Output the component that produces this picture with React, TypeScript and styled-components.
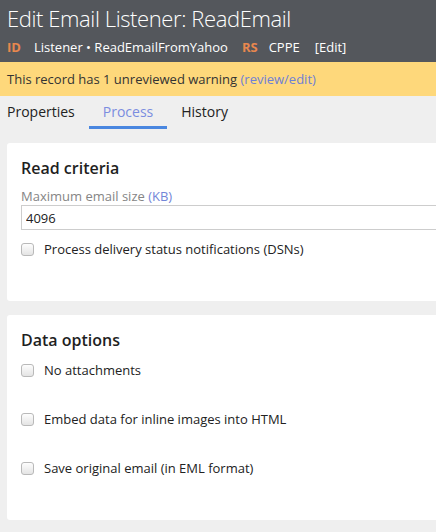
import React from "react";
import styled, { createGlobalStyle } from "styled-components";

const GlobalStyle = createGlobalStyle`
  html, body {
    margin: 0;
    padding: 0;
    background: #efefef;
  }
  body {
    font-family: "Open Sans", "Noto Sans", sans-serif;
    font-size: 13px;
    color: #222;
  }
`;

const Page = styled.div`
  width: 436px;
  height: 532px;
  overflow: hidden;
  background: #efefef;
  display: flex;
  flex-direction: column;
`;

const Header = styled.header`
  background: #54575c;
  color: #fff;
  padding: 3px 7px 6px;
`;

const Title = styled.h1`
  margin: 0;
  font-size: 22px;
  font-weight: 300;
  letter-spacing: -0.4px;
  line-height: 30px;
  white-space: nowrap;
`;

const Meta = styled.div`
  margin-top: 5px;
  display: flex;
  align-items: baseline;
  font-size: 13px;
  line-height: 18px;
  white-space: nowrap;
`;

const MetaKey = styled.span`
  color: #e8874e;
  font-weight: 700;
  margin-right: ${(p: { $gap: number }) => p.$gap}px;
`;

const MetaValue = styled.span<{ $gap?: number }>`
  margin-right: ${(p) => p.$gap ?? 0}px;
`;

const Warning = styled.div`
  background: #fed87b;
  padding: 0 7px;
  line-height: 34px;
  font-size: 13px;
  color: #333;
`;

const Link = styled.a`
  color: #6e80d6;
  text-decoration: none;
`;

const Tabs = styled.nav`
  display: flex;
  padding-top: 6px;
`;

const Tab = styled.div<{ $active?: boolean }>`
  padding: 0 14px 4px;
  font-size: 14px;
  line-height: 20px;
  color: ${(p) => (p.$active ? "#7b8de0" : "#222")};
  border-bottom: 3px solid ${(p) => (p.$active ? "#4a87e0" : "transparent")};

  &:first-child {
    padding-left: 7px;
  }
`;

const Body = styled.main`
  flex: 1;
  display: flex;
  flex-direction: column;
  gap: 14px;
  padding: 14px 0 0 7px;
`;

const Card = styled.section`
  background: #fff;
  border-radius: 3px 0 0 3px;
  padding: 14px 0 43px 14px;
  display: flex;
  flex-direction: column;
`;

const CardTitle = styled.h2`
  margin: 0 0 ${(p: { $gap: number }) => p.$gap}px;
  font-size: 16px;
  font-weight: 600;
  line-height: 22px;
  color: #1f1f1f;
`;

const Label = styled.label`
  color: #858585;
  font-size: 13px;
  line-height: 18px;
`;

const Unit = styled.span`
  color: #7286d8;
`;

const Input = styled.input`
  box-sizing: border-box;
  height: 25px;
  width: 100%;
  margin: 0;
  padding: 0 4px;
  border: 1px solid #cdcdcd;
  border-right: none;
  font-family: inherit;
  font-size: 13px;
  color: #222;
  outline: none;
`;

const Options = styled.div<{ $gap: number; $top: number }>`
  display: flex;
  flex-direction: column;
  gap: ${(p) => p.$gap}px;
  margin-top: ${(p) => p.$top}px;
`;

const Option = styled.label`
  display: flex;
  align-items: center;
  gap: 10px;
  line-height: 18px;
  font-size: 13px;
  color: #222;
`;

const Box = styled.span`
  box-sizing: border-box;
  width: 13px;
  height: 13px;
  border: 1px solid #b9b9b9;
  border-radius: 3px;
  background: linear-gradient(#fdfdfd, #e4e4e4);
  flex: none;
`;

function Checkbox({ children }: { children: React.ReactNode }) {
  return (
    <Option>
      <Box />
      <span>{children}</span>
    </Option>
  );
}

export default function App() {
  return (
    <Page>
      <GlobalStyle />
      <Header>
        <Title>Edit Email Listener: ReadEmail</Title>
        <Meta>
          <MetaKey $gap={13}>ID</MetaKey>
          <MetaValue $gap={14}>Listener • ReadEmailFromYahoo</MetaValue>
          <MetaKey $gap={11}>RS</MetaKey>
          <MetaValue $gap={15}>CPPE</MetaValue>
          <MetaValue>[Edit]</MetaValue>
        </Meta>
      </Header>
      <Warning>
        This record has 1 unreviewed warning <Link href="#">(review/edit)</Link>
      </Warning>
      <Tabs>
        <Tab>Properties</Tab>
        <Tab $active>Process</Tab>
        <Tab>History</Tab>
      </Tabs>
      <Body>
        <Card>
          <CardTitle $gap={8}>Read criteria</CardTitle>
          <Label>
            Maximum email size <Unit>(KB)</Unit>
          </Label>
          <Input defaultValue="4096" />
          <Options $gap={31} $top={10}>
            <Checkbox>Process delivery status notifications (DSNs)</Checkbox>
          </Options>
        </Card>
        <Card>
          <CardTitle $gap={0}>Data options</CardTitle>
          <Options $gap={31} $top={10}>
            <Checkbox>No attachments</Checkbox>
            <Checkbox>Embed data for inline images into HTML</Checkbox>
            <Checkbox>Save original email (in EML format)</Checkbox>
          </Options>
        </Card>
      </Body>
    </Page>
  );
}
